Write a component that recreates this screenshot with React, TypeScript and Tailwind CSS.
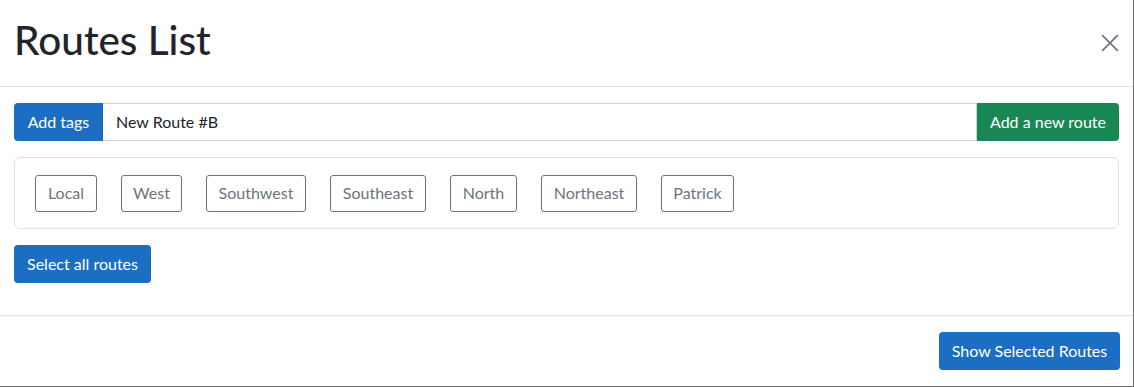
import React from "react";

const tags = [
  { name: "Local", w: "w-[62px]" },
  { name: "West", w: "w-[61px]" },
  { name: "Southwest", w: "w-[100px]" },
  { name: "Southeast", w: "w-[96px]" },
  { name: "North", w: "w-[67px]" },
  { name: "Northeast", w: "w-[96px]" },
  { name: "Patrick", w: "w-[73px]" },
];

export default function App() {
  return (
    <div className="w-[1134px] h-[387px] bg-white text-[#212529] font-['Segoe_UI','Lato',sans-serif]">
      <div className="h-[387px] border-b border-r border-[#6b6b6b] flex flex-col">
        {/* Header */}
        <div className="flex items-start justify-between px-[14px] pt-[16px] h-[87px] border-b border-[#dee2e6]">
          <h1 className="text-[40.5px] leading-[47px] font-medium">Routes List</h1>
          <button className="mt-[18px] mr-0 w-[18px] h-[18px] text-[#6c757d]" title="Close">
            <svg viewBox="0 0 16 16" className="w-[18px] h-[18px]" fill="none" stroke="currentColor" strokeWidth={1.5}>
              <path d="M1 1l14 14M15 1L1 15" />
            </svg>
          </button>
        </div>

        {/* Body */}
        <div className="px-[14px] pt-[16px] flex-1">
          <div className="flex h-[38px]">
            <button className="w-[89px] bg-[#1b6ec2] text-white rounded-l-[4px] text-[16px] shrink-0">Add tags</button>
            <input
              className="flex-1 border border-[#ced4da] border-l-0 px-[13px] text-[16px] text-[#212529] outline-none"
              defaultValue="New Route #B"
            />
            <button className="w-[142px] bg-[#198754] text-white rounded-r-[4px] text-[16px] shrink-0">Add a new route</button>
          </div>

          <div className="mt-[16px] border border-[#dee2e6] rounded-[6px] h-[72px] px-[20px] flex items-center gap-[24px]">
            {tags.map((t) => (
              <span
                key={t.name}
                className={`${t.w} h-[37px] flex items-center justify-center border border-[#6c757d] rounded-[3px] text-[16px] text-[#6c757d]`}
              >
                {t.name}
              </span>
            ))}
          </div>

          <button className="mt-[16px] h-[38px] w-[137px] bg-[#1b6ec2] text-white rounded-[4px] text-[16px]">
            Select all routes
          </button>
        </div>

        {/* Footer */}
        <div className="border-t border-[#dee2e6] h-[71px] flex items-center justify-end px-[13px]">
          <button className="h-[38px] w-[181px] bg-[#1b6ec2] text-white rounded-[4px] text-[16px]">
            Show Selected Routes
          </button>
        </div>
      </div>
    </div>
  );
}
